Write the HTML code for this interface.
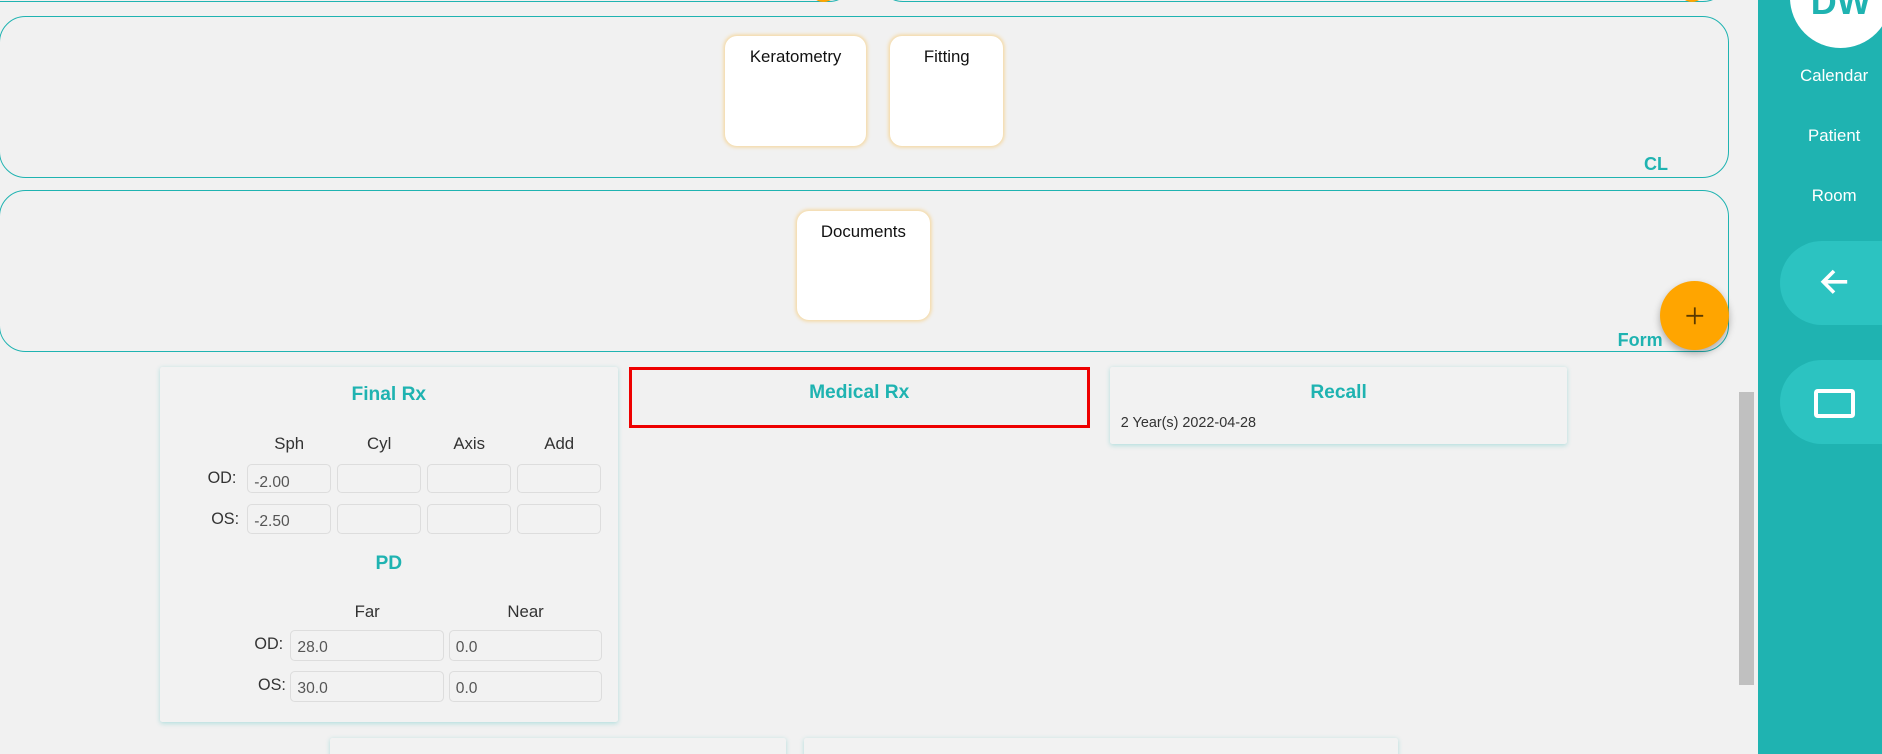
<!DOCTYPE html>
<html><head><style>
*{box-sizing:border-box;margin:0;padding:0}
html,body{width:1882px;height:754px;overflow:hidden;background:#f1f1f1}
#w{zoom:1.2;position:relative;width:1568px;height:628px;font-family:"Segoe UI","Liberation Sans",sans-serif;color:#222}
.a{position:absolute}
.box{position:absolute;border:1px solid #1fb3b1;border-radius:22px}
.card{position:absolute;background:#fff;border-radius:10px;box-shadow:0 0 3px 1px #f5d8a0;text-align:center;font-size:14px;padding-top:9px;color:#111}
.lbl{position:absolute;color:#1fb3b1;font-weight:bold;font-size:15px}
.pan{position:absolute;background:#f2f2f2;box-shadow:0 1px 4px rgba(31,179,177,.3);border-radius:2px}
.t{position:absolute;color:#1fb3b1;font-weight:bold;font-size:16px;text-align:center}
.in{position:absolute;border:1px solid #ddd;border-radius:4px;height:24px;font-size:13px;color:#555;padding:7px 0 0 5px}
.h{position:absolute;font-size:14px;color:#333;text-align:center}
.r{position:absolute;font-size:13.5px;color:#333}
.nav{position:absolute;left:1477px;width:103px;text-align:center;color:#fff;font-size:14px}
</style></head><body><div id="w">
<div class="box" style="left:-20px;top:-40px;width:732px;height:42px"></div>
<div class="box" style="left:732px;top:-40px;width:708px;height:42px"></div>
<div class="a" style="left:674px;top:-24px;width:24px;height:26px;border-radius:50%;background:#ffa500"></div>
<div class="a" style="left:1398px;top:-24px;width:24px;height:26px;border-radius:50%;background:#ffa500"></div>
<div class="box" style="left:-1px;top:13px;width:1442px;height:135px"></div>
<div class="box" style="left:-1px;top:158px;width:1442px;height:135px"></div>
<div class="card" style="left:604px;top:30px;width:118px;height:92px">Keratometry</div>
<div class="card" style="left:742px;top:30px;width:94px;height:92px">Fitting</div>
<div class="card" style="left:664px;top:176px;width:111px;height:91px">Documents</div>
<div class="lbl" style="left:1370px;top:128px">CL</div>
<div class="lbl" style="left:1348px;top:275px">Form</div>
<div class="a" style="left:1383px;top:234px;width:58px;height:58px;border-radius:50%;background:#ffa500;box-shadow:0 3px 6px rgba(0,0,0,.3)"><svg width="58" height="58"><path d="M22 29H36M29 22V36" stroke="#5a3a00" stroke-width="1.5"/></svg></div>
<div class="a" style="left:1449px;top:327px;width:13px;height:244px;background:#c0c0c0"></div>
<div class="a" style="left:1465px;top:0;width:103px;height:628px;background:#1fb3b1"></div>
<div class="a" style="left:1492px;top:-44px;width:84px;height:84px;border-radius:50%;background:#fff;color:#1fb3b1;font-weight:bold;font-size:30px;text-align:center;line-height:92px;overflow:hidden">DW</div>
<div class="nav" style="top:55px">Calendar</div>
<div class="nav" style="top:105px">Patient</div>
<div class="nav" style="top:155px">Room</div>
<div class="a" style="left:1483px;top:201px;width:120px;height:70px;border-radius:35px;background:#2cc3c1"><svg width="86" height="70"><path d="M56 34H36M45 25L36 34L45 43" stroke="#fff" stroke-width="3" fill="none"/></svg></div>
<div class="a" style="left:1483px;top:300px;width:120px;height:70px;border-radius:35px;background:#2cc3c1"><div class="a" style="left:29px;top:24px;width:34px;height:24px;border:4px solid #fff;border-radius:3px"></div></div>

<div class="pan" style="left:133px;top:306px;width:382px;height:296px">
<div class="t" style="left:0;width:382px;top:14px">Final Rx</div>
<div class="h" style="left:73px;width:70px;top:56px">Sph</div>
<div class="h" style="left:148px;width:70px;top:56px">Cyl</div>
<div class="h" style="left:223px;width:70px;top:56px">Axis</div>
<div class="h" style="left:298px;width:70px;top:56px">Add</div>
<div class="r" style="left:40px;top:85px">OD:</div>
<div class="r" style="left:43px;top:119px">OS:</div>
<div class="in" style="left:73px;top:81px;width:70px">-2.00</div>
<div class="in" style="left:148px;top:81px;width:70px"></div>
<div class="in" style="left:223px;top:81px;width:70px"></div>
<div class="in" style="left:298px;top:81px;width:70px"></div>
<div class="in" style="left:73px;top:114px;width:70px;height:25px">-2.50</div>
<div class="in" style="left:148px;top:114px;width:70px;height:25px"></div>
<div class="in" style="left:223px;top:114px;width:70px;height:25px"></div>
<div class="in" style="left:298px;top:114px;width:70px;height:25px"></div>
<div class="t" style="left:0;width:382px;top:155px">PD</div>
<div class="h" style="left:109px;width:128px;top:196px">Far</div>
<div class="h" style="left:241px;width:128px;top:196px">Near</div>
<div class="r" style="left:79px;top:223px">OD:</div>
<div class="r" style="left:82px;top:257px">OS:</div>
<div class="in" style="left:109px;top:219px;width:128px;height:26px">28.0</div>
<div class="in" style="left:241px;top:219px;width:128px;height:26px">0.0</div>
<div class="in" style="left:109px;top:253px;width:128px;height:26px">30.0</div>
<div class="in" style="left:241px;top:253px;width:128px;height:26px">0.0</div>
</div>
<div class="a" style="left:524px;top:306px;width:384px;height:51px;border:3px solid #ee0000"></div>
<div class="t" style="left:524px;width:384px;top:318px">Medical Rx</div>
<div class="pan" style="left:925px;top:306px;width:381px;height:64px">
<div class="t" style="left:0;width:381px;top:12px">Recall</div>
<div class="a" style="left:9px;top:40px;font-size:12px;color:#333">2 Year(s) 2022-04-28</div>
</div>
<div class="pan" style="left:275px;top:615px;width:380px;height:40px"></div>
<div class="pan" style="left:670px;top:615px;width:495px;height:40px"></div>
</div></body></html>
